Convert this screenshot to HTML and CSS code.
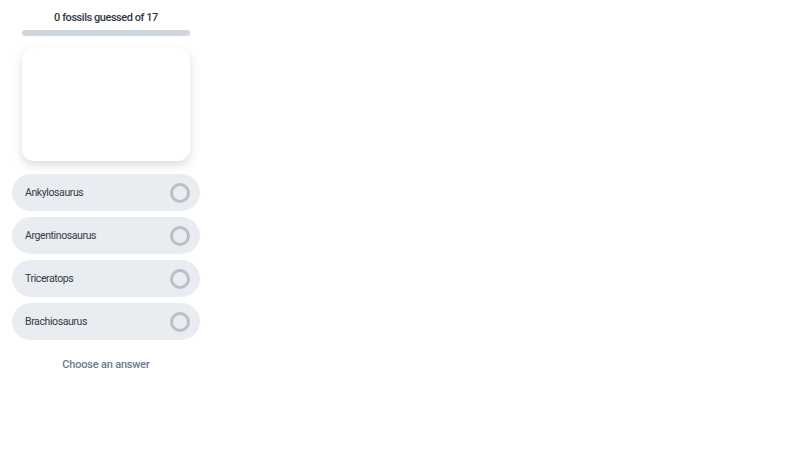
FILE: index.html
```html
<!DOCTYPE html>
<html lang="en">
<head>
    <meta charset="UTF-8">
    <meta name="viewport" content="width=device-width, initial-scale=1.0">
    <title>Fossil quiz</title>
    <link rel="stylesheet" href="styles.css">
</head>
<body>
    <div class="quiz">
        <div class="header">
            <p class="count">0 fossils guessed of 17</p>
            <div class="progress"><div class="progress-fill"></div></div>
            <div class="picture"></div>
        </div>
        <ul class="options">
            <li class="option"><span>Ankylosaurus</span><span class="radio"></span></li>
            <li class="option"><span>Argentinosaurus</span><span class="radio"></span></li>
            <li class="option"><span>Triceratops</span><span class="radio"></span></li>
            <li class="option"><span>Brachiosaurus</span><span class="radio"></span></li>
        </ul>
        <p class="hint">Choose an answer</p>
    </div>
</body>
</html>
```

FILE: styles.css
```css
body {
    margin: 0;
    font-family: Roboto, 'Liberation Sans', sans-serif;
    background-color: #ffffff;
    color: #2f3640;
}
.quiz {
    width: 188px;
    margin-left: 12px;
    padding-top: 10px;
}
.header {
    padding: 0 10px;
}
.count {
    margin: 0;
    font-size: 11px;
    font-weight: 500;
    letter-spacing: -0.45px;
    line-height: 15px;
    text-align: center;
    color: #323a45;
}
.progress {
    margin-top: 5px;
    height: 6px;
    border-radius: 3px;
    background-color: #cfd6de;
    overflow: hidden;
}
.progress-fill {
    width: 0;
    height: 100%;
    background-color: #4a90d9;
}
.picture {
    margin-top: 12px;
    height: 113px;
    border-radius: 12px;
    background-color: #fff;
    box-shadow: 0 4px 10px rgba(30, 40, 60, 0.16);
}
.options {
    list-style: none;
    margin: 13px 0 0;
    padding: 0;
    display: flex;
    flex-direction: column;
    gap: 6px;
}
.option {
    height: 37px;
    border-radius: 19px;
    background-color: #e9edf1;
    display: flex;
    align-items: center;
    justify-content: space-between;
    padding: 0 10px 0 13px;
    font-size: 10.5px;
    letter-spacing: -0.4px;
    color: #323a45;
}
.radio {
    width: 14px;
    height: 14px;
    border: 3px solid #b9bfc5;
    border-radius: 50%;
}
.hint {
    margin: 18px 0 0;
    text-align: center;
    font-size: 11px;
    font-weight: 500;
    letter-spacing: -0.2px;
    color: #6b7a90;
}
```
